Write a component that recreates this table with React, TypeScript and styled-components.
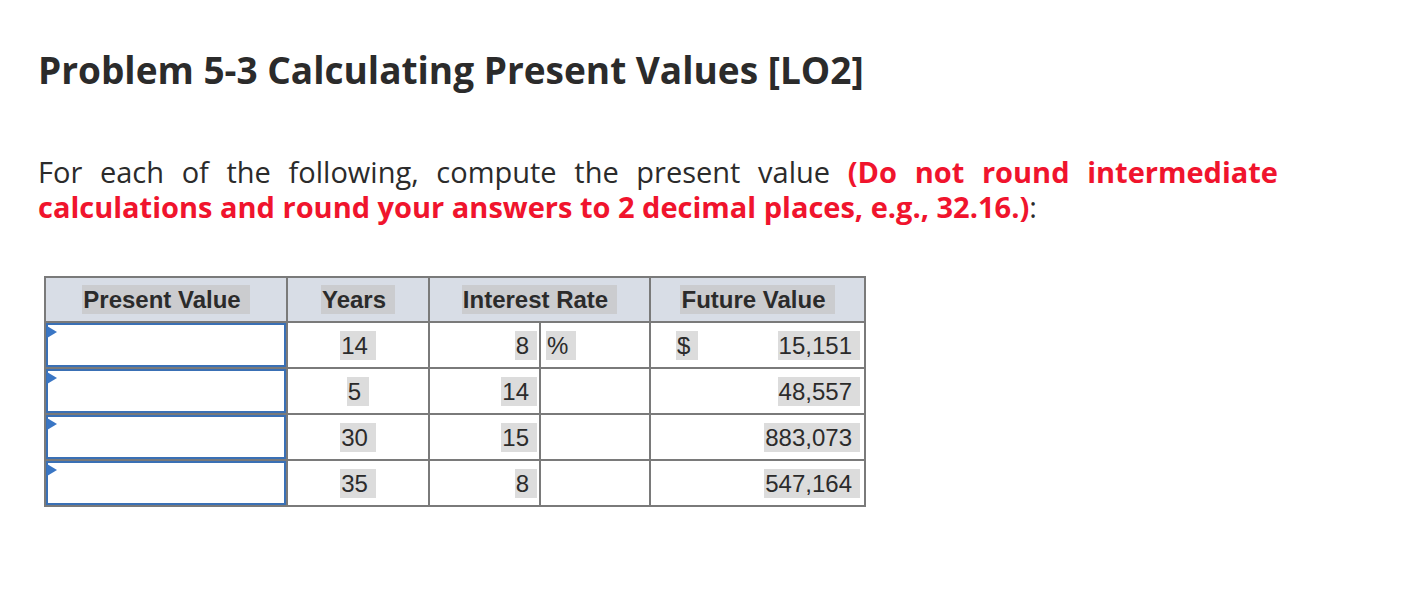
import styled, { createGlobalStyle } from "styled-components";

type Row = {
  years: string;
  rate: string;
  future: string;
  first?: boolean;
};

const rows: Row[] = [
  { years: "14", rate: "8", future: "15,151", first: true },
  { years: "5", rate: "14", future: "48,557" },
  { years: "30", rate: "15", future: "883,073" },
  { years: "35", rate: "8", future: "547,164" },
];

const GlobalStyle = createGlobalStyle`
body {
  margin: 0;
  background: #ffffff;
}
`;

const Page = styled.main`
padding: 44px 0 0 38px;
width: 1240px;
font-family: "Open Sans", Lato, sans-serif;
color: #2b2b2b;
`;

const Title = styled.h1`
margin: 0;
font-size: 37px;
line-height: 52px;
font-weight: 700;
`;

const Intro = styled.p`
margin: 58px 0 0;
font-size: 29px;
line-height: 35px;
`;

const Line = styled.span<{ $full?: boolean }>`
display: block;
text-align: ${(p) => (p.$full ? "justify" : "left")};
text-align-last: ${(p) => (p.$full ? "justify" : "auto")};
`;

const Red = styled.strong`
color: #f0142d;
font-weight: 700;
`;

const Grid = styled.table`
margin: 52px 0 0 6px;
border-collapse: collapse;
table-layout: fixed;
width: 822px;
font-family: "Liberation Sans", Arial, sans-serif;
font-size: 24px;
color: #2b2b2b;
`;

const Head = styled.th`
height: 43px;
padding: 0;
background: #d8dde6;
border: 2px solid #7a7a7a;
text-align: center;
vertical-align: middle;
font-weight: 700;
`;

const Cell = styled.td<{ $align?: string; $pad?: string }>`
height: 44px;
padding: ${(p) => p.$pad || "0"};
border: 2px solid #7a7a7a;
text-align: ${(p) => p.$align || "center"};
vertical-align: middle;
`;

const Mark = styled.span<{ $head?: boolean }>`
display: inline-block;
line-height: 29px;
padding: 0 ${(p) => (p.$head ? "9px" : "8px")} 0 1px;
background: ${(p) => (p.$head ? "#cbcccf" : "#dcdcdc")};
`;

const Entry = styled.div`
position: relative;
height: 44px;
box-sizing: border-box;
border: 2px solid #3a70b5;
background: #ffffff;

&::before {
  content: "";
  position: absolute;
  left: -1px;
  top: 1px;
  border-style: solid;
  border-width: 6px 0 6px 10px;
  border-color: transparent transparent transparent #3a76c4;
}
`;

const EntryInput = styled.input`
width: 100%;
height: 100%;
box-sizing: border-box;
border: 0;
outline: none;
background: transparent;
font: inherit;
text-align: right;
padding: 0 8px;
`;

const Money = styled.div`
display: flex;
align-items: center;
justify-content: space-between;
`;

export default function App() {
  return (
    <Page>
      <GlobalStyle />
      <Title>Problem 5-3 Calculating Present Values [LO2]</Title>
      <Intro>
        <Line $full>
          For each of the following, compute the present value <Red>(Do not round intermediate</Red>
        </Line>
        <Line>
          <Red>calculations and round your answers to 2 decimal places, e.g., 32.16.)</Red>:
        </Line>
      </Intro>
      <Grid>
        <colgroup>
          <col style={{ width: 242 }} />
          <col style={{ width: 142 }} />
          <col style={{ width: 111 }} />
          <col style={{ width: 110 }} />
          <col style={{ width: 215 }} />
        </colgroup>
        <thead>
          <tr>
            <Head><Mark $head>Present Value</Mark></Head>
            <Head><Mark $head>Years</Mark></Head>
            <Head colSpan={2}><Mark $head>Interest Rate</Mark></Head>
            <Head><Mark $head>Future Value</Mark></Head>
          </tr>
        </thead>
        <tbody>
          {rows.map((r, i) => (
            <tr key={i}>
              <Cell>
                <Entry>
                  <EntryInput aria-label="Present value" />
                </Entry>
              </Cell>
              <Cell><Mark>{r.years}</Mark></Cell>
              <Cell $align="right" $pad="0 2px 0 0"><Mark>{r.rate}</Mark></Cell>
              <Cell $align="left" $pad="0 0 0 5px">{r.first && <Mark>%</Mark>}</Cell>
              <Cell $pad="0 4px 0 25px">
                <Money>
                  <span>{r.first && <Mark>$</Mark>}</span>
                  <Mark>{r.future}</Mark>
                </Money>
              </Cell>
            </tr>
          ))}
        </tbody>
      </Grid>
    </Page>
  );
}
